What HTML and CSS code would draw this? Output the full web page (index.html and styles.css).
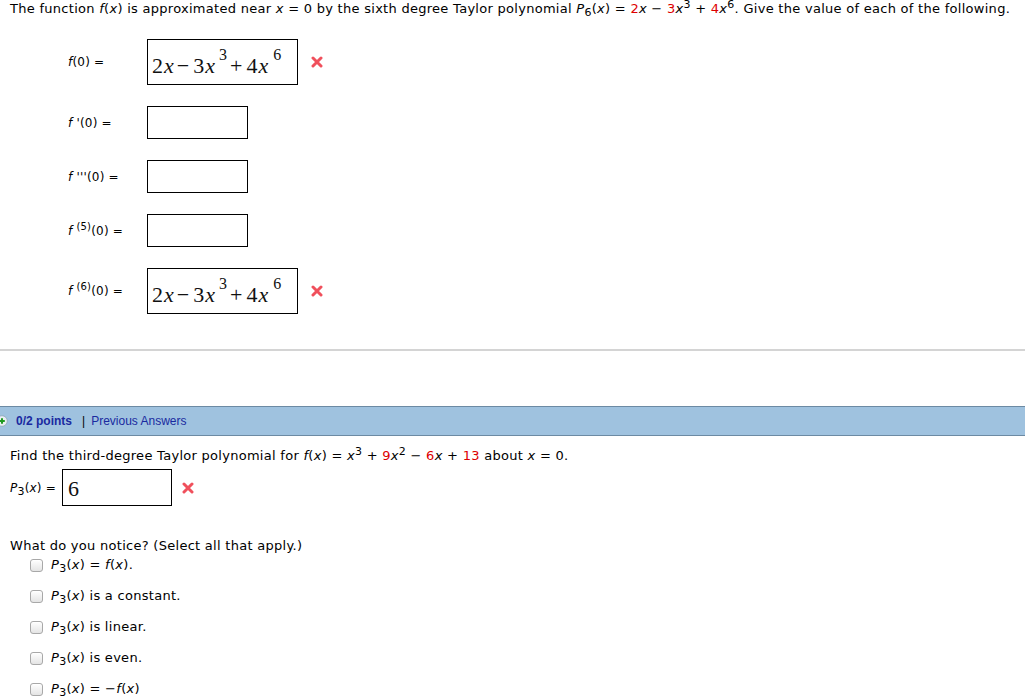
FILE: index.html
```html
<!DOCTYPE html>
<html>
<head>
<meta charset="utf-8">
<link rel="stylesheet" href="styles.css">
</head>
<body>
<div class="intro">The function <i>f</i>(<i>x</i>) is approximated near <i>x</i> = 0 by the sixth degree Taylor polynomial <i>P</i><sub>6</sub>(<i>x</i>) = <span class="red">2</span><i>x</i> &minus; <span class="red">3</span><i>x</i><sup>3</sup> + <span class="red">4</span><i>x</i><sup>6</sup>. Give the value of each of the following.</div>

<div class="rows">
  <div class="row">
    <div class="label"><i>f</i>(0) =</div>
    <div class="box big"><span class="math">2<i>x</i><span class="op">&minus;</span>3<i>x</i><sup>3</sup><span class="op">+</span>4<i>x</i><sup>6</sup></span></div>
    <svg class="wrong" viewBox="0 0 12 12"><path d="M2 2L10 10M10 2L2 10"/></svg>
  </div>
  <div class="row">
    <div class="label"><i>f</i> '(0) =</div>
    <div class="box small"></div>
  </div>
  <div class="row">
    <div class="label"><i>f</i> '''(0) =</div>
    <div class="box small"></div>
  </div>
  <div class="row">
    <div class="label"><i>f</i> <sup class="ord">(5)</sup>(0) =</div>
    <div class="box small"></div>
  </div>
  <div class="row">
    <div class="label"><i>f</i> <sup class="ord">(6)</sup>(0) =</div>
    <div class="box big"><span class="math">2<i>x</i><span class="op">&minus;</span>3<i>x</i><sup>3</sup><span class="op">+</span>4<i>x</i><sup>6</sup></span></div>
    <svg class="wrong" viewBox="0 0 12 12"><path d="M2 2L10 10M10 2L2 10"/></svg>
  </div>
</div>

<div class="sep"></div>

<div class="bar">
  <svg class="plus" viewBox="0 0 12 12"><circle cx="6" cy="6" r="5.3"/><path d="M6 3.2V8.8M3.2 6H8.8"/></svg>
  <span class="pts">0/2 points</span>
  <span class="pipe">|</span>
  <span class="prev">Previous Answers</span>
</div>

<div class="q2">
  <div class="line">Find the third-degree Taylor polynomial for <i>f</i>(<i>x</i>) = <i>x</i><sup>3</sup> + <span class="red">9</span><i>x</i><sup>2</sup> &minus; <span class="red">6</span><i>x</i> + <span class="red">13</span> about <i>x</i> = 0.</div>
  <div class="prow">
    <div class="plabel"><i>P</i><sub>3</sub>(<i>x</i>) =</div>
    <div class="box answer"><span class="math">6</span></div>
    <svg class="wrong" viewBox="0 0 12 12"><path d="M2 2L10 10M10 2L2 10"/></svg>
  </div>
  <div class="notice">What do you notice? (Select all that apply.)</div>
  <ul class="opts">
    <li><span class="cb"></span><span class="opt"><i>P</i><sub>3</sub>(<i>x</i>) = <i>f</i>(<i>x</i>).</span></li>
    <li><span class="cb"></span><span class="opt"><i>P</i><sub>3</sub>(<i>x</i>) is a constant.</span></li>
    <li><span class="cb"></span><span class="opt"><i>P</i><sub>3</sub>(<i>x</i>) is linear.</span></li>
    <li><span class="cb"></span><span class="opt"><i>P</i><sub>3</sub>(<i>x</i>) is even.</span></li>
    <li><span class="cb"></span><span class="opt"><i>P</i><sub>3</sub>(<i>x</i>) = &minus;<i>f</i>(<i>x</i>)</span></li>
  </ul>
</div>
</body>
</html>
```

FILE: styles.css
```css
html, body {
  margin: 0;
  padding: 0;
  background: #fff;
}
body {
  font-family: "DejaVu Sans", Verdana, sans-serif;
  font-size: 13px;
  color: #000;
  line-height: 16px;
  letter-spacing: 0.28px;
}
.red { color: #dd0000; }
sup {
  font-size: 11px;
  vertical-align: 5px;
  line-height: 0;
}
sub {
  font-size: 11px;
  vertical-align: -3px;
  line-height: 0;
}
.intro {
  padding: 1px 10px 0 10px;
  white-space: nowrap;
}
.rows {
  margin-left: 68px;
  margin-top: 22px;
  display: flex;
  flex-direction: column;
  gap: 21px;
}
.row {
  display: flex;
  align-items: center;
}
.label {
  width: 79px;
  font-size: 12px;
  letter-spacing: 0.2px;
}
.label .ord {
  font-size: 10px;
  vertical-align: 5px;
}
.box {
  border: 1px solid #000;
  box-sizing: border-box;
  display: flex;
  align-items: center;
  background: #fff;
}
.box.big {
  width: 151px;
  height: 46px;
  padding-left: 4px;
}
.box.small {
  width: 101px;
  height: 33px;
}
.math {
  font-family: "Liberation Serif", "Times New Roman", serif;
  font-size: 22px;
  line-height: 24px;
  padding-top: 7px;
  color: #111;
  letter-spacing: 0;
  white-space: nowrap;
}
.math i {
  font-style: italic;
  margin-left: 1px;
}
.math sup {
  font-size: 16px;
  vertical-align: 13px;
  font-style: normal;
  margin-left: 4px;
}
.math .op {
  margin: 0 4px 0 3px;
}
.math sup + .op {
  margin-left: 3px;
}
.math sup:last-child {
  margin-left: 5px;
}
.wrong {
  width: 12px;
  height: 12px;
  margin-left: 13px;
}
.wrong path {
  stroke: #f0505c;
  stroke-width: 3;
  stroke-linecap: round;
  fill: none;
}
.sep {
  height: 2px;
  background: #d4d4d4;
  margin-top: 35px;
}
.bar {
  margin-top: 55px;
  height: 28px;
  background: #9fc2df;
  border-top: 1px solid #6c8aa3;
  border-bottom: 1px solid #6c8aa3;
  display: flex;
  align-items: center;
  font-family: "Liberation Sans", Arial, sans-serif;
  font-size: 12px;
  color: #1a2aa0;
  letter-spacing: 0;
}
.plus {
  width: 12px;
  height: 12px;
  margin-left: -4px;
  margin-right: 8px;
}
.plus circle {
  fill: #e8eef2;
  stroke: #8ea4b6;
  stroke-width: 0.8;
}
.plus path {
  stroke: #1f9a1f;
  stroke-width: 2;
}
.pts { font-weight: bold; }
.pipe {
  color: #000;
  margin: 0 6px 0 10px;
}
.q2 {
  padding: 0 10px;
}
.line {
  margin-top: 12px;
}
.prow {
  display: flex;
  align-items: center;
  margin-top: 5px;
}
.plabel {
  width: 52px;
  font-size: 12px;
  letter-spacing: 0.2px;
}
.box.answer {
  width: 110px;
  height: 37px;
  padding-left: 5px;
}
.answer .math {
  padding-top: 2px;
}
.prow .wrong {
  margin-left: 10px;
}
.notice {
  margin-top: 32px;
}
.opts {
  list-style: none;
  margin: 3px 0 0 0;
  padding: 0 0 0 20px;
  display: flex;
  flex-direction: column;
  gap: 15px;
}
.opts li {
  display: flex;
  align-items: center;
  height: 16px;
}
.cb {
  display: inline-block;
  flex: none;
  width: 11px;
  height: 11px;
  border: 1px solid #a8a8a8;
  border-radius: 3px;
  background: linear-gradient(#ffffff, #e4e4e4);
  margin-right: 8px;
  box-shadow: inset 0 1px 0 #fff;
}
.opt {
  white-space: nowrap;
}
```
